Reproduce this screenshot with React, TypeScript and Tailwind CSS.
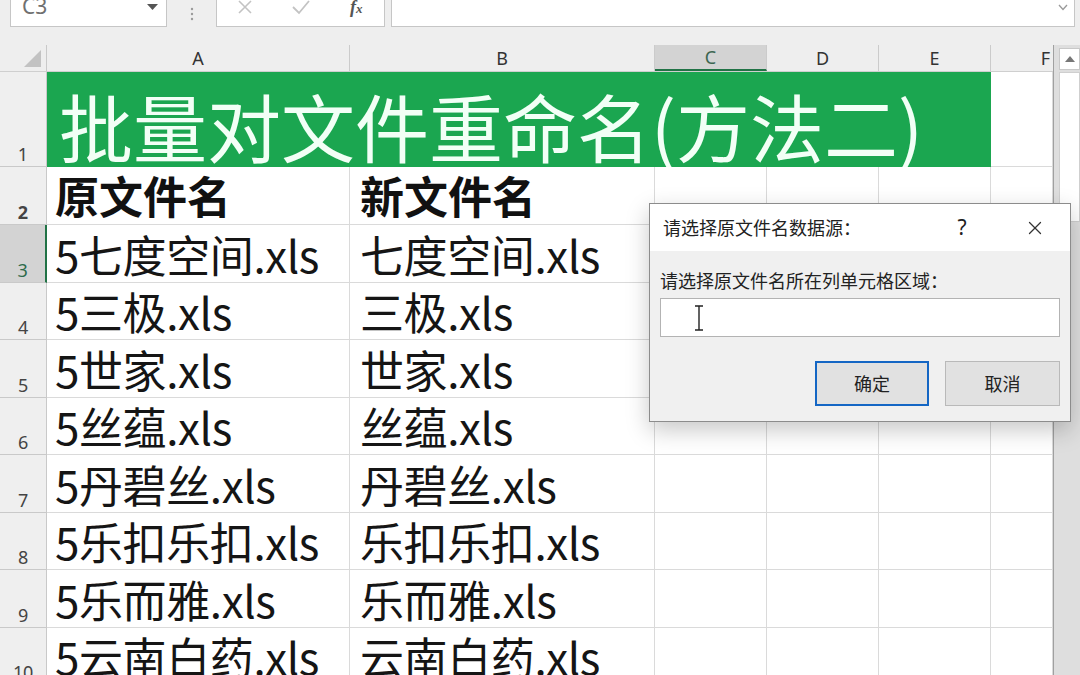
import { X } from "lucide-react";

const rows = [
    { n: 3, a: "5七度空间.xls", b: "七度空间.xls" },
    { n: 4, a: "5三极.xls", b: "三极.xls" },
    { n: 5, a: "5世家.xls", b: "世家.xls" },
    { n: 6, a: "5丝蕴.xls", b: "丝蕴.xls" },
    { n: 7, a: "5丹碧丝.xls", b: "丹碧丝.xls" },
    { n: 8, a: "5乐扣乐扣.xls", b: "乐扣乐扣.xls" },
    { n: 9, a: "5乐而雅.xls", b: "乐而雅.xls" },
    { n: 10, a: "5云南白药.xls", b: "云南白药.xls" },
]

const cols = [
    { label: "A", w: "w-[303px]" },
    { label: "B", w: "w-[305px]" },
    { label: "C", w: "w-[112px]" },
    { label: "D", w: "w-[112px]" },
    { label: "E", w: "w-[112px]" },
]

const RowHeader = ({ n, h, active }: { n: number; h: string; active?: boolean }) => (
    <div
        className={`${h} w-[47px] shrink-0 flex items-end justify-center pb-[3px] border-b border-[#c9c9c9] font-['Noto_Sans',sans-serif] text-[18px] leading-none ${
            active
                ? "bg-[#d3d3d3] text-[#2e6b4b] border-r-2 border-r-[#217346]"
                : "bg-[#efefef] text-[#444] border-r border-r-[#c9c9c9]"
        }`}
    >
        {n}
    </div>
)

const TopBar = () => (
    <div className="h-[45px] bg-[#eeeeee] flex items-start">
        <div className="ml-[10px] -mt-[13px] w-[157px] h-[40px] bg-white border border-[#c6c6c6] flex items-center justify-between pl-[11px] pr-[8px]">
            <span className="font-['Noto_Sans',sans-serif] text-[21px] text-[#707070]">C3</span>
            <svg width="11" height="7" viewBox="0 0 11 7">
                <path d="M0 0 L11 0 L5.5 6 Z" fill="#555" />
            </svg>
        </div>
        <div className="w-[49px] h-[27px] flex justify-center items-center">
            <svg width="4" height="16" viewBox="0 0 4 16">
                <circle cx="2" cy="3" r="1.2" fill="#9a9a9a" />
                <circle cx="2" cy="8" r="1.2" fill="#9a9a9a" />
                <circle cx="2" cy="13" r="1.2" fill="#9a9a9a" />
            </svg>
        </div>
        <div className="-mt-[13px] w-[169px] h-[40px] bg-white border border-[#c6c6c6] flex items-center">
            <div className="w-[56px] flex justify-center">
                <svg width="16" height="16" viewBox="0 0 16 16">
                    <path d="M2 2 L14 14 M14 2 L2 14" stroke="#c3c3c3" strokeWidth="1.6" />
                </svg>
            </div>
            <div className="w-[56px] flex justify-center">
                <svg width="20" height="16" viewBox="0 0 20 16">
                    <path d="M2 8 L8 14 L18 2" stroke="#c3c3c3" strokeWidth="1.8" fill="none" />
                </svg>
            </div>
            <div className="w-[56px] flex justify-center">
                <span className="font-['Liberation_Serif',serif] italic font-bold text-[18px] text-[#555] leading-none">
                    f<span className="text-[13px]">x</span>
                </span>
            </div>
        </div>
        <div className="ml-[6px] -mt-[13px] w-[684px] h-[40px] bg-white border border-[#c6c6c6] flex items-center justify-end pr-[6px]">
            <svg width="10" height="7" viewBox="0 0 10 7">
                <path d="M1 1 L5 5.5 L9 1" stroke="#9a9a9a" strokeWidth="1.3" fill="none" />
            </svg>
        </div>
    </div>
)

const HeaderRow = () => (
    <div className="flex h-[27px] bg-[#eeeeee] border-b border-[#cfcfcf] font-['Noto_Sans',sans-serif] text-[18px] text-[#333]">
        <div className="w-[47px] shrink-0 flex items-end justify-end pr-[5px] pb-[4px] border-r border-[#c9c9c9]">
            <svg width="17" height="17" viewBox="0 0 17 17">
                <path d="M17 0 L17 17 L0 17 Z" fill="#c2c2c2" />
            </svg>
        </div>
        {cols.map((c) => (
            <div
                key={c.label}
                className={`${c.w} shrink-0 flex items-center justify-center border-r border-[#cbcbcb] ${
                    c.label === "C" ? "bg-[#d3d3d3] text-[#3c6650] border-b-2 border-b-[#217346]" : ""
                }`}
            >
                {c.label}
            </div>
        ))}
        <div className="w-[62px] shrink-0 flex items-center justify-end pr-[3px]">F</div>
    </div>
)

const Cell = ({ w, children, pl }: { w: string; children?: React.ReactNode; pl?: string }) => (
    <div className={`${w} shrink-0 border-r border-b border-[#dadada] flex items-end overflow-hidden whitespace-nowrap ${pl ?? ""}`}>
        {children}
    </div>
)

const Sheet = () => (
    <div className="w-[1053px] shrink-0">
        <HeaderRow />
        {/* row 1: merged title */}
        <div className="flex h-[95px]">
            <RowHeader n={1} h="h-[95px]" />
            <div className="w-[944px] shrink-0 bg-[#1ba650] flex items-end pl-[12px] pb-[5px] overflow-hidden whitespace-nowrap">
                <span className="text-[74px] leading-none text-[#f2fff6]">批量对文件重命名(方法二)</span>
            </div>
            <Cell w="w-[62px]" />
        </div>
        {/* row 2: column titles */}
        <div className="flex h-[58px] text-[44px] leading-none font-bold text-[#111]">
            <RowHeader n={2} h="h-[58px]" />
            <Cell w="w-[303px]" pl="pl-[8px] pb-[7px]">原文件名</Cell>
            <Cell w="w-[305px]" pl="pl-[10px] pb-[7px]">新文件名</Cell>
            <Cell w="w-[112px]" />
            <Cell w="w-[112px]" />
            <Cell w="w-[112px]" />
            <Cell w="w-[62px]" />
        </div>
        {rows.map((r) => (
            <div key={r.n} className="flex h-[57.5px] text-[44px] leading-none tracking-[-0.4px] text-[#151515]">
                <RowHeader n={r.n} h="h-[57.5px]" active={r.n === 3} />
                <Cell w="w-[303px]" pl="pl-[8px] pb-[6px]">{r.a}</Cell>
                <Cell w="w-[305px]" pl="pl-[10px] pb-[6px]">{r.b}</Cell>
                <Cell w="w-[112px]" />
                <Cell w="w-[112px]" />
                <Cell w="w-[112px]" />
                <Cell w="w-[62px]" />
            </div>
        ))}
    </div>
)

const Scrollbar = () => (
    <div className="w-[27px] shrink-0 bg-[#dedede] border-l border-[#a0a0a0] flex flex-col items-end pt-[3px]">
        <div className="w-[21px] h-[22px] bg-white border border-[#c8c8c8] flex items-center justify-center">
            <svg width="10" height="6" viewBox="0 0 10 6">
                <path d="M0 6 L5 0 L10 6 Z" fill="#777" />
            </svg>
        </div>
        <div className="w-[21px] h-[150px] mt-[2px] bg-white border border-[#cfcfcf]" />
    </div>
)

const Dialog = () => (
    <div className="absolute left-[649px] top-[203px] w-[422px] h-[219px] bg-[#f0f0f0] border border-[#8c8c8c] shadow-[0_8px_22px_rgba(0,0,0,0.22)] flex flex-col text-[#222]">
        <div className="h-[47px] bg-white flex items-center pl-[13px] pr-[24px]">
            <span className="text-[18px] flex-1">请选择原文件名数据源：</span>
            <span className="font-['Noto_Sans',sans-serif] text-[21px] w-[20px] text-center mr-[52px]">?</span>
            <X size={22} strokeWidth={1.4} color="#333" />
        </div>
        <div className="flex flex-col px-[10px] pt-[19px]">
            <span className="text-[18px] leading-[20px]">请选择原文件名所在列单元格区域：</span>
            <div className="mt-[8px] h-[39px] bg-white border border-[#b3b3b3] flex items-center pl-[33px]">
                <svg width="10" height="26" viewBox="0 0 10 26">
                    <path d="M1 1 H9 M5 1 V25 M1 25 H9" stroke="#222" strokeWidth="1.4" fill="none" />
                </svg>
            </div>
            <div className="mt-[24px] flex justify-end gap-[16px]">
                <button className="w-[114px] h-[45px] bg-[#e1e1e1] border-2 border-[#1466c4] text-[18px] text-[#222]">
                    确定
                </button>
                <button className="w-[115px] h-[45px] bg-[#e1e1e1] border border-[#b9b9b9] text-[18px] text-[#222]">
                    取消
                </button>
            </div>
        </div>
    </div>
)

const App = () => (
    <div className="w-[1080px] h-[675px] overflow-hidden relative bg-white font-['Noto_Sans_CJK_SC','Noto_Sans',sans-serif]">
        <TopBar />
        <div className="flex">
            <Sheet />
            <Scrollbar />
        </div>
        <Dialog />
    </div>
)

export default App
